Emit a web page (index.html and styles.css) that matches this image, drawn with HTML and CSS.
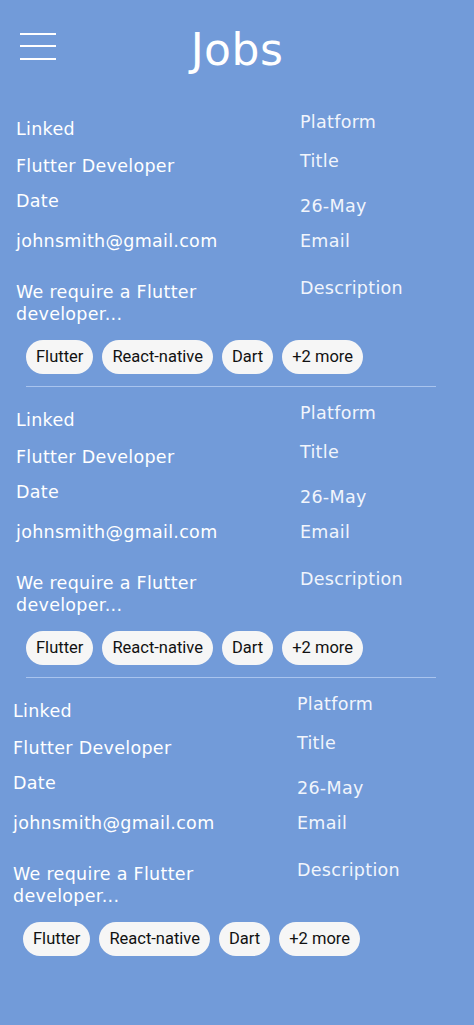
FILE: index.html
```html
<!DOCTYPE html>
<html>
<head>
<meta charset="utf-8">
<link rel="stylesheet" href="styles.css">
</head>
<body>
<header class="topbar">
  <div class="menu">
    <svg width="36" height="27" viewBox="0 0 36 27"><path d="M0 1h36M0 13h36M0 26h36" stroke="#fff" stroke-width="2"/></svg>
  </div>
  <h1 class="title">Jobs</h1>
  <div></div>
</header>

<section class="card">
  <div class="cols">
    <div class="col left">
      <div class="l1">Linked</div>
      <div class="l2">Flutter Developer</div>
      <div class="l3">Date</div>
      <div class="l4">johnsmith@gmail.com</div>
      <div class="l5">We require a Flutter<br>developer...</div>
    </div>
    <div class="col right">
      <div class="r1">Platform</div>
      <div class="r2">Title</div>
      <div class="r3">26-May</div>
      <div class="r4">Email</div>
      <div class="r5">Description</div>
    </div>
  </div>
  <div class="chips">
    <span class="chip">Flutter</span><span class="chip">React-native</span><span class="chip">Dart</span><span class="chip">+2 more</span>
  </div>
  <div class="divider"></div>
</section>

<section class="card">
  <div class="cols">
    <div class="col left">
      <div class="l1">Linked</div>
      <div class="l2">Flutter Developer</div>
      <div class="l3">Date</div>
      <div class="l4">johnsmith@gmail.com</div>
      <div class="l5">We require a Flutter<br>developer...</div>
    </div>
    <div class="col right">
      <div class="r1">Platform</div>
      <div class="r2">Title</div>
      <div class="r3">26-May</div>
      <div class="r4">Email</div>
      <div class="r5">Description</div>
    </div>
  </div>
  <div class="chips">
    <span class="chip">Flutter</span><span class="chip">React-native</span><span class="chip">Dart</span><span class="chip">+2 more</span>
  </div>
  <div class="divider"></div>
</section>

<section class="card shifted">
  <div class="cols">
    <div class="col left">
      <div class="l1">Linked</div>
      <div class="l2">Flutter Developer</div>
      <div class="l3">Date</div>
      <div class="l4">johnsmith@gmail.com</div>
      <div class="l5">We require a Flutter<br>developer...</div>
    </div>
    <div class="col right">
      <div class="r1">Platform</div>
      <div class="r2">Title</div>
      <div class="r3">26-May</div>
      <div class="r4">Email</div>
      <div class="r5">Description</div>
    </div>
  </div>
  <div class="chips">
    <span class="chip">Flutter</span><span class="chip">React-native</span><span class="chip">Dart</span><span class="chip">+2 more</span>
  </div>
</section>
</body>
</html>
```

FILE: styles.css
```css
html, body {
  margin: 0;
  padding: 0;
}
body {
  background: #729bd9;
  min-height: 1025px;
  font-family: "DejaVu Sans", "Open Sans", sans-serif;
  color: #fff;
}
.topbar {
  height: 100px;
  display: grid;
  grid-template-columns: 1fr auto 1fr;
  align-items: center;
}
.menu {
  padding-left: 20px;
  height: 27px;
  margin-top: -7px;
}
.menu svg { display: block; }
.title {
  margin: 0;
  font-weight: 400;
  font-size: 44px;
  line-height: 50px;
  letter-spacing: 0.5px;
}
.card {
  padding-left: 16px;
  padding-bottom: 4px;
}
.card.shifted { padding-left: 13px; }
.cols {
  display: flex;
}
.col {
  display: flex;
  flex-direction: column;
  font-size: 17.5px;
  line-height: 22px;
  letter-spacing: 0.3px;
}
.left { width: 284px; padding-top: 18px; }
.right { padding-top: 11px; color: #f1f5fc; }
.l2 { margin-top: 15px; }
.l3 { margin-top: 13px; }
.l4 { margin-top: 18px; }
.l5 { margin-top: 29px; }
.r2 { margin-top: 17px; }
.r3 { margin-top: 23px; }
.r4 { margin-top: 13px; }
.r5 { margin-top: 25px; }
.chips {
  display: flex;
  gap: 9px;
  margin-top: 15px;
  padding-left: 10px;
}
.chip {
  height: 34px;
  padding: 0 10px;
  border-radius: 17px;
  background: #f6f6f6;
  color: #111;
  font-family: Roboto, "Liberation Sans", sans-serif;
  font-size: 16.5px;
  line-height: 34px;
}
.divider {
  margin: 12px 0 0 10px;
  width: 410px;
  height: 1px;
  background: #a9c4ee;
}
```
